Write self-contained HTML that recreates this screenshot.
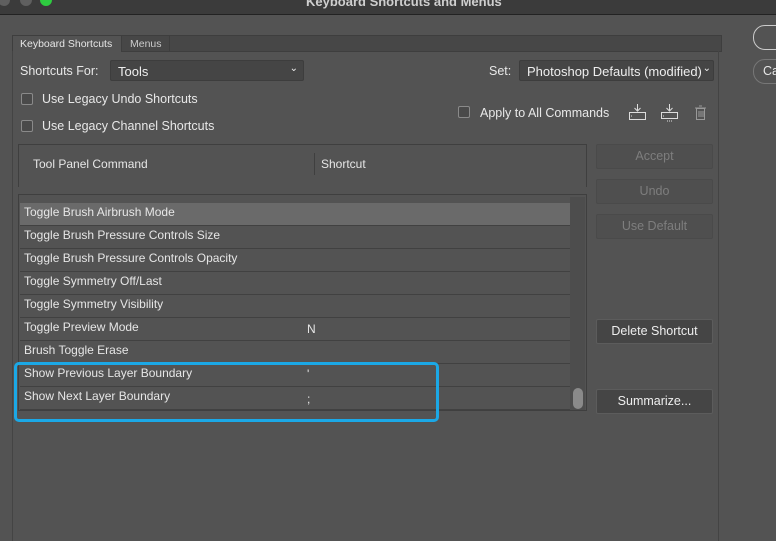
<!DOCTYPE html>
<html><head><style>
*{box-sizing:border-box;margin:0;padding:0}
html,body{width:776px;height:536px}
body{background:#535353;font-family:"Liberation Sans",sans-serif;color:#e6e6e6;font-size:12px;position:relative;overflow:hidden}
.a{position:absolute}
.tb{left:0;top:0;width:776px;height:15px;background:#3b3b3b;border-bottom:1px solid #222}
.dot{top:-6px;width:12px;height:12px;border-radius:50%}
.dd{background:#454545;border:1px solid #3d3d3d;border-radius:2px;height:21px;font-size:13px;padding:3px 7px;color:#eee}
.cb{width:12px;height:12px;border:1px solid #8a8a8a;border-radius:2px;background:#4a4a4a}
.lbl{font-size:12.5px;color:#e8e8e8}
.btn{left:596px;width:117px;height:25px;border:1px solid #4a4a4a;border-radius:2px;background:#4f4f4f;color:#7e7e7e;text-align:center;line-height:23px;font-size:12.5px}
.btn.on{background:#454545;color:#eee;border-color:#5c5c5c}
.row{left:20px;width:550px;height:23px;border-bottom:1px solid #414141;padding:2px 4px;font-size:12px}
</style></head><body>
<div class="a tb"></div>
<div class="a dot" style="left:-2px;background:#5f5f5f"></div>
<div class="a dot" style="left:20px;background:#5f5f5f"></div>
<div class="a dot" style="left:40px;background:#2ecc40"></div>
<div class="a" style="left:306px;top:-6px;font-weight:bold;font-size:13px;color:#cfcfcf">Keyboard Shortcuts and Menus</div>
<div class="a" style="left:12px;top:35px;width:710px;height:17px;background:#474747;border:1px solid #3e3e3e"></div>
<div class="a" style="left:13px;top:36px;width:109px;height:16px;background:#535353;border-right:1px solid #3e3e3e;font-size:10.5px;padding:2px 7px">Keyboard Shortcuts</div>
<div class="a" style="left:122px;top:36px;width:48px;height:15px;border-right:1px solid #3e3e3e;font-size:10.5px;padding:2px 8px;color:#ccc">Menus</div>
<div class="a" style="left:12px;top:51px;width:707px;height:490px;border-left:1px solid #444;border-right:1px solid #444"></div>
<div class="a lbl" style="left:20px;top:64px">Shortcuts For:</div>
<div class="a dd" style="left:110px;top:60px;width:194px">Tools<span style="position:absolute;right:5px;top:2px;font-size:10px">⌄</span></div>
<div class="a lbl" style="left:489px;top:64px">Set:</div>
<div class="a dd" style="left:519px;top:60px;width:195px">Photoshop Defaults (modified)<span style="position:absolute;right:2px;top:2px;font-size:10px">⌄</span></div>
<div class="a cb" style="left:21px;top:93px"></div><div class="a lbl" style="left:42px;top:92px">Use Legacy Undo Shortcuts</div>
<div class="a cb" style="left:21px;top:120px"></div><div class="a lbl" style="left:42px;top:119px">Use Legacy Channel Shortcuts</div>
<div class="a cb" style="left:458px;top:106px"></div><div class="a lbl" style="left:480px;top:106px">Apply to All Commands</div>
<svg class="a" style="left:628px;top:103px" width="80" height="20" fill="none" stroke="#ddd" stroke-width="1">
<path d="M1.5 9.5h16v7h-16zM9.5 1v6M6.5 5l3 3 3-3"/><path d="M3 13h1"/>
<path d="M33.5 9.5h16v6h-16zM41.5 1v6M38.5 5l3 3 3-3M35 13h1M39 18h1M41 18h1M43 18h1"/>
<path d="M68.5 5.5h8v11h-8zM67 5h11M71 3h3M71 8v6M73 8v6M75 8v6" stroke="#999"/>
</svg>
<div class="a" style="left:18px;top:144px;width:569px;height:43px;border:1px solid #3f3f3f;border-bottom:none"></div>
<div class="a" style="left:33px;top:157px;font-size:12px">Tool Panel Command</div>
<div class="a" style="left:314px;top:153px;width:1px;height:22px;background:#3f3f3f"></div>
<div class="a" style="left:321px;top:157px;font-size:12px">Shortcut</div>
<div class="a" style="left:18px;top:194px;width:569px;height:217px;border:1px solid #3f3f3f;background:#535353"></div>
<div class="a" style="left:570px;top:197px;width:15px;height:213px;background:#4d4d4d"></div>
<div class="a" style="left:573px;top:388px;width:10px;height:21px;background:#8a8a8a;border-radius:5px"></div>
<div class="a row" style="top:203px;background:#6a6a6a">Toggle Brush Airbrush Mode</div>
<div class="a row" style="top:226px">Toggle Brush Pressure Controls Size</div>
<div class="a row" style="top:249px">Toggle Brush Pressure Controls Opacity</div>
<div class="a row" style="top:272px">Toggle Symmetry Off/Last</div>
<div class="a row" style="top:295px">Toggle Symmetry Visibility</div>
<div class="a row" style="top:318px">Toggle Preview Mode<span style="position:absolute;left:287px;top:4px">N</span></div>
<div class="a row" style="top:341px">Brush Toggle Erase</div>
<div class="a row" style="top:364px">Show Previous Layer Boundary<span style="position:absolute;left:287px;top:3px">'</span></div>
<div class="a row" style="top:387px">Show Next Layer Boundary<span style="position:absolute;left:287px;top:5px">;</span></div>
<div class="a" style="left:14px;top:362px;width:425px;height:60px;border:3px solid #1ba8e6;border-radius:5px"></div>
<div class="a btn" style="top:144px">Accept</div>
<div class="a btn" style="top:179px">Undo</div>
<div class="a btn" style="top:214px">Use Default</div>
<div class="a btn on" style="top:319px">Delete Shortcut</div>
<div class="a btn on" style="top:389px">Summarize...</div>
<div class="a" style="left:753px;top:25px;width:40px;height:25px;border:1px solid #ccc;border-radius:12px"></div>
<div class="a" style="left:753px;top:59px;width:40px;height:25px;border:1px solid #777;border-radius:12px;padding:4px 9px;font-size:12.5px">Ca</div>
</body></html>
